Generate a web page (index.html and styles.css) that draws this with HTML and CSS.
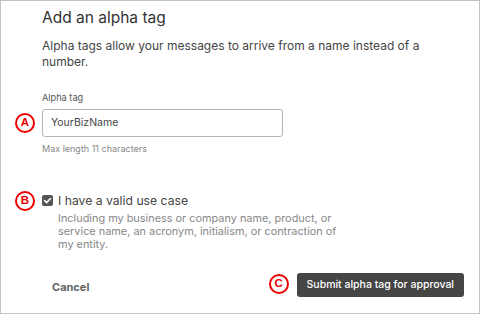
FILE: index.html
```html
<!DOCTYPE html>
<html>
<head>
<meta charset="utf-8">
<link rel="stylesheet" href="styles.css">
</head>
<body>
<div class="frame">
  <h1 class="title">Add an alpha tag</h1>
  <p class="intro">Alpha tags allow your messages to arrive from a name instead of a number.</p>

  <div class="field">
    <label class="label">Alpha tag</label>
    <div class="input-wrap">
      <span class="marker marker-a">A</span>
      <div class="input">YourBizName</div>
    </div>
    <div class="hint">Max length 11 characters</div>
  </div>

  <div class="check-row">
    <span class="marker marker-b">B</span>
    <span class="checkbox">
      <svg width="9" height="9" viewBox="0 0 10 10"><path d="M1.8 5.2 L4 7.3 L8.3 2.8" fill="none" stroke="#fff" stroke-width="1.8" stroke-linecap="round" stroke-linejoin="round"/></svg>
    </span>
    <div class="check-text">
      <div class="check-label">I have a valid use case</div>
      <div class="check-desc">Including my business or company name, product, or service name, an acronym, initialism, or contraction of my entity.</div>
    </div>
  </div>

  <div class="actions">
    <span class="cancel">Cancel</span>
    <div class="submit-wrap">
      <span class="marker marker-c">C</span>
      <button class="submit">Submit alpha tag for approval</button>
    </div>
  </div>
</div>
</body>
</html>
```
FILE: styles.css
```css
html, body {
  margin: 0;
  padding: 0;
  background: #fff;
}
.frame {
  box-sizing: border-box;
  width: 480px;
  height: 314px;
  border: 1px solid #c4c4c4;
  padding: 0 0 0 41px;
  font-family: "Inter", "Liberation Sans", sans-serif;
  color: #333;
  position: relative;
}
.title {
  margin: 0;
  padding-top: 7px;
  font-size: 15.5px;
  font-weight: 400;
  line-height: 20px;
  color: #333;
}
.intro {
  margin: 10px 0 0;
  width: 410px;
  font-size: 12px;
  line-height: 16px;
  color: #444;
}
.field {
  margin-top: 22px;
}
.label {
  display: block;
  font-size: 9.2px;
  line-height: 12px;
  color: #555;
}
.input-wrap {
  position: relative;
  margin-top: 5px;
}
.input {
  box-sizing: border-box;
  width: 241px;
  height: 28px;
  border: 1px solid #b5b5b5;
  border-radius: 3px;
  padding-left: 8px;
  font-size: 10.5px;
  line-height: 26px;
  color: #444;
}
.hint {
  margin-top: 6px;
  font-size: 9px;
  line-height: 12px;
  color: #888;
}
.check-row {
  position: relative;
  display: flex;
  align-items: flex-start;
  margin-top: 38px;
}
.checkbox {
  flex: none;
  width: 11px;
  height: 11px;
  margin-top: 2px;
  border-radius: 2px;
  background: #555;
  display: flex;
  align-items: center;
  justify-content: center;
}
.check-text {
  margin-left: 5px;
}
.check-label {
  font-size: 12.2px;
  line-height: 15px;
  color: #444;
}
.check-desc {
  margin-top: 4px;
  width: 285px;
  font-size: 10.9px;
  line-height: 13px;
  color: #888;
}
.actions {
  display: flex;
  justify-content: space-between;
  align-items: center;
  margin-top: 21px;
  padding-right: 15px;
}
.cancel {
  margin-left: 10px;
  font-size: 11px;
  font-weight: 700;
  color: #666;
  margin-top: 4px;
}
.submit-wrap {
  position: relative;
}
.submit {
  height: 24px;
  padding: 0 10px;
  border: none;
  border-radius: 3px;
  background: #454545;
  color: #fff;
  font-family: "Inter", "Liberation Sans", sans-serif;
  font-size: 10.5px;
  font-weight: 500;
  line-height: 22px;
}
.marker {
  position: absolute;
  box-sizing: border-box;
  width: 20px;
  height: 20px;
  border: 2.5px solid #e00;
  border-radius: 50%;
  background: #fff;
  color: #e00;
  font-family: "Liberation Sans", sans-serif;
  font-weight: 700;
  font-size: 11.5px;
  line-height: 15px;
  text-align: center;
}
.marker-a {
  left: -27px;
  top: 4px;
}
.marker-b {
  left: -27px;
  top: -2px;
}
.marker-c {
  left: -28px;
  top: 2px;
}
```
